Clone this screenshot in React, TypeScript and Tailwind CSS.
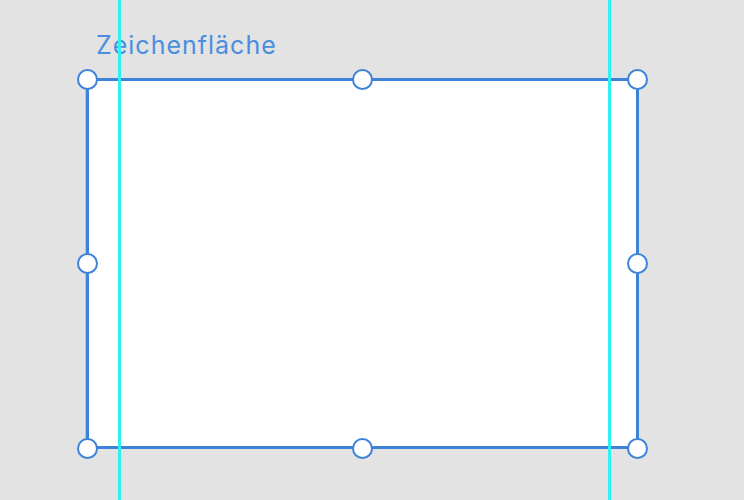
import React from "react";

const handles = [
  { id: "tl", x: 87, y: 79 },
  { id: "tc", x: 362, y: 79 },
  { id: "tr", x: 637, y: 79 },
  { id: "ml", x: 87, y: 263 },
  { id: "mr", x: 637, y: 263 },
  { id: "bl", x: 87, y: 448 },
  { id: "bc", x: 362, y: 448 },
  { id: "br", x: 637, y: 448 },
];

export default function App() {
  return (
    <div className="relative w-[744px] h-[500px] overflow-hidden bg-[#e3e3e3] font-['Inter','Liberation_Sans',sans-serif]">
      {/* Artboard label */}
      <div className="pl-[96px] pt-[30px] h-[78px] text-[25px] leading-[30px] text-[#4a8ee0] tracking-[1px]">
        Zeichenfläche
      </div>

      {/* Artboard with selection outline */}
      <div className="ml-[86px] w-[553px] h-[371px] bg-white border-[3px] border-[#3d84d8] shadow-[-1px_0_0_0_#c4c4c4]"></div>

      {/* Guides */}
      <div className="absolute top-0 bottom-0 left-[118px] w-[3px] bg-[#2ef2f2]"></div>
      <div className="absolute top-0 bottom-0 left-[608px] w-[3px] bg-[#2ef2f2]"></div>

      {/* Resize handles */}
      {handles.map((h) => (
        <div
          key={h.id}
          className="absolute w-[21px] h-[21px] -ml-[10.5px] -mt-[10.5px] rounded-full bg-white border-[2.5px] border-[#3d84d8]"
          style={{ left: h.x, top: h.y }}
        ></div>
      ))}
    </div>
  );
}
